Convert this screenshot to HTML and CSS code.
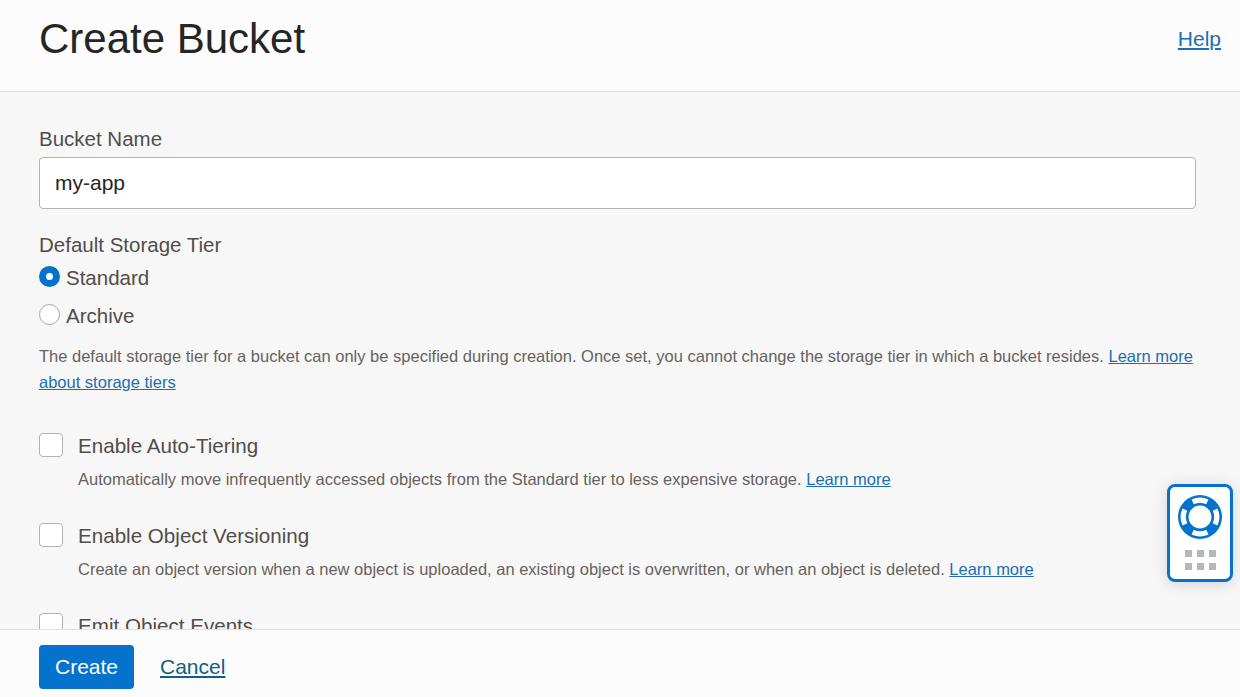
FILE: index.html
```html
<!DOCTYPE html>
<html lang="en">
<head>
<meta charset="utf-8">
<title>Create Bucket</title>
<link rel="stylesheet" href="styles.css">
</head>
<body>
<div class="panel">
  <header class="head">
    <h1 class="title">Create Bucket</h1>
    <a class="help" href="#">Help</a>
  </header>
  <main class="body">
    <label class="field-label">Bucket Name</label>
    <div class="input">my-app</div>
    <div class="field-label tier-label">Default Storage Tier</div>
    <div class="radio-row"><span class="radio on"></span><span class="radio-text">Standard</span></div>
    <div class="radio-row"><span class="radio"></span><span class="radio-text">Archive</span></div>
    <p class="hint">The default storage tier for a bucket can only be specified during creation. Once set, you cannot change the storage tier in which a bucket resides. <a href="#">Learn more about storage tiers</a></p>
    <div class="check">
      <span class="box"></span>
      <div>
        <div class="check-label">Enable Auto-Tiering</div>
        <div class="check-hint">Automatically move infrequently accessed objects from the Standard tier to less expensive storage. <a href="#">Learn more</a></div>
      </div>
    </div>
    <div class="check">
      <span class="box"></span>
      <div>
        <div class="check-label">Enable Object Versioning</div>
        <div class="check-hint">Create an object version when a new object is uploaded, an existing object is overwritten, or when an object is deleted. <a href="#">Learn more</a></div>
      </div>
    </div>
    <div class="check">
      <span class="box"></span>
      <div>
        <div class="check-label">Emit Object Events</div>
      </div>
    </div>
  </main>
  <footer class="foot">
    <button class="primary">Create</button>
    <a class="cancel" href="#">Cancel</a>
  </footer>
</div>
<div class="widget">
  <svg class="buoy" width="44" height="44" viewBox="0 0 46 46">
    <circle cx="23" cy="23" r="23" fill="#0572ce"/>
    <circle cx="23" cy="23" r="12" fill="#fff"/>
    <g fill="none" stroke="#fff" stroke-width="5.5">
      <path d="M15.33 7.27 A17.5 17.5 0 0 1 30.67 7.27"/>
      <path d="M15.33 7.27 A17.5 17.5 0 0 1 30.67 7.27" transform="rotate(90 23 23)"/>
      <path d="M15.33 7.27 A17.5 17.5 0 0 1 30.67 7.27" transform="rotate(180 23 23)"/>
      <path d="M15.33 7.27 A17.5 17.5 0 0 1 30.67 7.27" transform="rotate(270 23 23)"/>
    </g>
  </svg>
  <div class="dots"><i></i><i></i><i></i><i></i><i></i><i></i></div>
</div>
</body>
</html>
```
FILE: styles.css
```css
* { box-sizing: border-box; }
html, body { margin: 0; height: 100%; overflow: hidden; }
body { font-family: "Liberation Sans", Arial, sans-serif; color: #524d49; background: #f7f7f7; }
a { color: #1a6fb5; text-decoration: underline; }
.panel { display: flex; flex-direction: column; height: 697px; }
.head {
  flex: 0 0 92px; display: flex; justify-content: space-between; align-items: flex-start;
  padding: 0 19px 0 39px; background: #fcfcfc; border-bottom: 1px solid #e3e1de;
}
.title { margin: 14px 0 0; font-size: 42px; line-height: 50px; font-weight: 400; color: #252525; }
.help { font-size: 21px; line-height: 26px; margin-top: 26px; }
.body { flex: 1 1 auto; overflow: hidden; padding: 35px 44px 0 39px; min-height: 0; }
.field-label { display: block; font-size: 20.5px; line-height: 24px; }
.input {
  margin-top: 6px; height: 52px; padding: 0 15px; display: flex; align-items: center;
  background: #fff; border: 1px solid #b5b3b0; border-radius: 4px; font-size: 21px; color: #252525;
}
.tier-label { margin-top: 24px; }
.radio-row { display: flex; align-items: center; gap: 6px; height: 38px; font-size: 20.5px; }
.radio-text { position: relative; top: 2px; }
.radio { width: 21px; height: 21px; border-radius: 50%; border: 1px solid #a9a7a4; background: #fff; }
.radio.on { border: 7px solid #0572ce; }
.hint { margin: 10px 0 0; font-size: 16.5px; line-height: 26px; color: #67625e; }
.check { display: flex; gap: 15px; margin-top: 35px; height: 55px; }
.hint + .check { margin-top: 38px; }
.box { flex: 0 0 24px; height: 24px; background: #fff; border: 1px solid #b5b3b0; border-radius: 4px; }
.check-label { font-size: 20.6px; line-height: 26px; }
.check-hint { margin-top: 9px; font-size: 16.5px; line-height: 22px; color: #67625e; }
.foot {
  flex: 0 0 68px; display: flex; align-items: flex-start; gap: 26px; padding: 15px 0 0 39px;
  background: #fcfcfc; border-top: 1px solid #e3e1de;
}
.primary {
  width: 95px; height: 44px; border: 0; border-radius: 4px; background: #0572ce; color: #fff;
  font: 21px "Liberation Sans", Arial, sans-serif; padding: 0;
}
.cancel { font-size: 21px; line-height: 44px; color: #0f5f85; }
.widget {
  position: fixed; left: 1167px; top: 484px; width: 66px; height: 98px;
  background: #fff; border: 3px solid #0572ce; border-radius: 8px;
  box-shadow: 0 2px 16px rgba(0,0,0,.14);
  display: flex; flex-direction: column; align-items: center; padding-top: 8px;
}
.buoy { display: block; }
.dots { margin-top: 11px; display: grid; grid-template-columns: repeat(3, 7px); gap: 6px 5px; }
.dots i { width: 7px; height: 7px; background: #b5b8bd; display: block; }
```
